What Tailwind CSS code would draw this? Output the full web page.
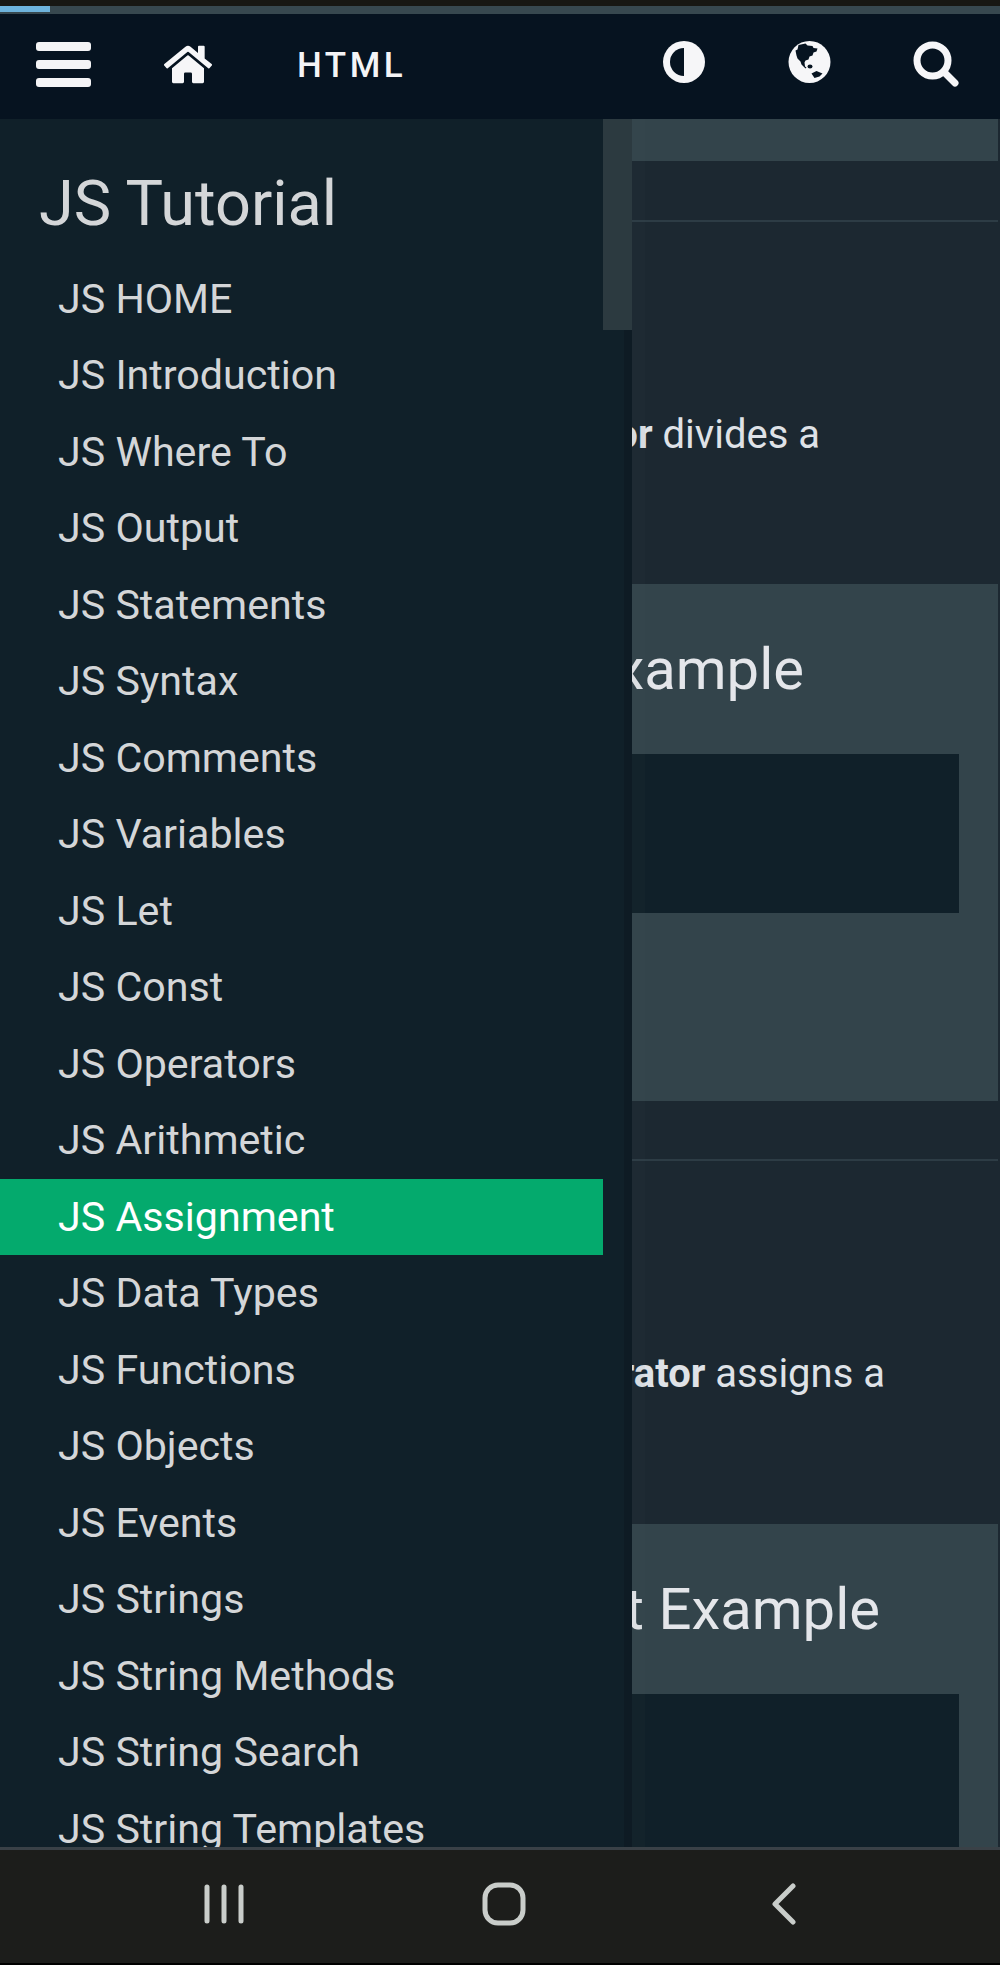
<!DOCTYPE html>
<html lang="en">
<head>
  <meta charset="UTF-8">
  <title>JS Tutorial</title>
  <script src="https://cdn.jsdelivr.net/npm/@tailwindcss/browser@4"></script>
</head>
<body class="bg-black font-['Roboto',sans-serif]">
  <div class="flex flex-col w-[1000px] h-[1965px] overflow-hidden">

    <!-- status strip and progress -->
    <div class="h-[6px] bg-[#171713]"></div>
    <div class="h-[8px] bg-[#37484f]">
      <div class="w-[50px] h-[6px] bg-[#6db3dc]"></div>
    </div>

    <!-- top nav -->
    <div class="flex items-center h-[105px] pl-[36px] pr-[41px] bg-[#061320] text-white">
      <div class="flex flex-col gap-[9px] w-[55px] mb-[5px]">
        <div class="h-[9px] rounded-[3px] bg-[#f4f4f6]"></div>
        <div class="h-[9px] rounded-[3px] bg-[#f4f4f6]"></div>
        <div class="h-[9px] rounded-[3px] bg-[#f4f4f6]"></div>
      </div>
      <svg class="ml-[73px] mb-[5px] w-[48px] h-[43px]" viewBox="0 0 576 512" fill="#f6f6f8"><path d="M280.37 148.26L96 300.11V464a16 16 0 0 0 16 16l112.06-.29a16 16 0 0 0 15.92-16V368a16 16 0 0 1 16-16h64a16 16 0 0 1 16 16v95.64a16 16 0 0 0 16 16.05L464 480a16 16 0 0 0 16-16V300L295.67 148.26a12.19 12.19 0 0 0-15.3 0zM571.6 251.47L488 182.56V44.05a12 12 0 0 0-12-12h-56a12 12 0 0 0-12 12v72.61L318.47 43a48 48 0 0 0-61 0L4.34 251.47a12 12 0 0 0-1.6 16.9l25.5 31A12 12 0 0 0 45.15 301l235.22-193.74a12.19 12.19 0 0 1 15.3 0L530.9 301a12 12 0 0 0 16.9-1.6l25.5-31a12 12 0 0 0-1.7-16.93z"/></svg>
      <div class="ml-[85px] text-[35px] font-medium tracking-[3.500px] text-[#f4f4f6]">HTML</div>
      <svg class="ml-auto mb-[9px] w-[42px] h-[42px]" viewBox="0 0 42 42"><circle cx="21" cy="21" r="21" fill="#f6f6f8"/><path d="M21 7a14 14 0 0 0 0 28z" fill="#061320"/></svg>
      <svg class="ml-[83px] mb-[9px] w-[43px] h-[42px]" viewBox="0 0 42 42"><circle cx="21" cy="21" r="21" fill="#f6f6f8"/><path d="M10 4l7-1.500 2 2 5 .5 1 2 4 .5-1 3-3 1-1 3-3 1-1 3-3 1-1 2 .5 4 1.500 1-1 1-4-4-1-3-3-3-1-3-1-5 2-1z" fill="#061320"/><ellipse cx="21.500" cy="25.500" rx="2.500" ry="2" fill="#061320"/><path d="M23 32.500l5-2.500 6 2.500-3 3-5 1.500z" fill="#061320"/></svg>
      <svg class="ml-[82px] mb-[5px] w-[46px] h-[46px]" viewBox="0 0 46 46" fill="none" stroke="#f6f6f8" stroke-width="7" stroke-linecap="round"><circle cx="19.500" cy="19.500" r="15.500"/><path d="M31 31l11 11"/></svg>
    </div>

    <div class="flex flex-1 min-h-0">
      <!-- sidebar -->
      <div class="relative w-[632px] shrink-0 bg-[#102029] overflow-hidden text-[#d4d6d8]">
        <div class="absolute inset-y-0 right-0 w-[8px] bg-[#0e1b24]"></div>
        <div class="absolute top-0 right-0 w-[29px] h-[211px] bg-[#2c3a40]"></div>
        <h4 class="h-[141.500px] pt-[47px] pl-[39px] text-[63px] leading-[76px]">JS Tutorial</h4>
        <div class="relative w-[603px] text-[41.200px] leading-[76.500px] whitespace-nowrap">
          <a class="block pl-[58px]">JS HOME</a>
          <a class="block pl-[58px]">JS Introduction</a>
          <a class="block pl-[58px]">JS Where To</a>
          <a class="block pl-[58px]">JS Output</a>
          <a class="block pl-[58px]">JS Statements</a>
          <a class="block pl-[58px]">JS Syntax</a>
          <a class="block pl-[58px]">JS Comments</a>
          <a class="block pl-[58px]">JS Variables</a>
          <a class="block pl-[58px]">JS Let</a>
          <a class="block pl-[58px]">JS Const</a>
          <a class="block pl-[58px]">JS Operators</a>
          <a class="block pl-[58px]">JS Arithmetic</a>
          <a class="block pl-[58px] bg-[#04aa6d] text-white">JS Assignment</a>
          <a class="block pl-[58px]">JS Data Types</a>
          <a class="block pl-[58px]">JS Functions</a>
          <a class="block pl-[58px]">JS Objects</a>
          <a class="block pl-[58px]">JS Events</a>
          <a class="block pl-[58px]">JS Strings</a>
          <a class="block pl-[58px]">JS String Methods</a>
          <a class="block pl-[58px]">JS String Search</a>
          <a class="block pl-[58px]">JS String Templates</a>
        </div>
      </div>

      <!-- page beside the sidebar, its text runs off under the left edge -->
      <div class="relative flex-1 min-w-0 bg-[#1c2831] overflow-hidden">
        <div class="h-[42px] mr-[2px] bg-[#33444b]"></div>
        <div class="h-[61px] mr-[2px] border-b-2 border-[#2d3c45]"></div>
        <p class="flex justify-end items-center h-[362px] pt-[64px] pr-[180px] text-[40px] whitespace-nowrap text-[#dfe2e7]"><span>The <b>division operator</b> divides a</span></p>
        <div class="h-[517px] mr-[2px] bg-[#33444b]">
          <h3 class="flex justify-end items-center h-[170px] pr-[194px] text-[58px] whitespace-nowrap text-[#e4e6ea]">Division Example</h3>
          <div class="h-[159px] mr-[39px] bg-[#102029]"></div>
        </div>
        <div class="h-[60px] mr-[2px] border-b-2 border-[#2d3c45]"></div>
        <p class="flex justify-end items-center h-[363px] pt-[63px] pr-[115px] text-[40px] whitespace-nowrap text-[#dfe2e7]"><span>The <b>assignment operator</b> assigns a</span></p>
        <div class="h-[400px] mr-[2px] bg-[#33444b]">
          <h3 class="flex justify-end items-center h-[170px] pr-[118px] text-[58px] whitespace-nowrap text-[#e4e6ea]">Assignment Example</h3>
          <div class="h-[200px] mr-[39px] bg-[#102029]"></div>
        </div>
        <div class="absolute inset-y-0 left-0 w-[13px] bg-[#4a5a62]/5"></div>
      </div>
    </div>

    <!-- phone nav buttons -->
    <div class="h-[118px] border-t-[3px] border-[#3a4147] border-b-2 border-b-black bg-[#1c1d1b]">
      <div class="grid grid-cols-3 w-[840px] h-full ml-[84px] pb-[6px] place-items-center">
        <svg class="w-[40px] h-[40px]" viewBox="0 0 40 40" stroke="#c9cdca" stroke-width="5" stroke-linecap="round"><path d="M3 3v34M20 3v34M37 3v34"/></svg>
        <svg class="w-[44px] h-[44px]" viewBox="0 0 44 44" fill="none" stroke="#c9cdca" stroke-width="5"><rect x="3" y="3" width="38" height="38" rx="13"/></svg>
        <svg class="w-[24px] h-[42px]" viewBox="0 0 24 42" fill="none" stroke="#c9cdca" stroke-width="5" stroke-linecap="round" stroke-linejoin="round"><path d="M21 3L3 21l18 18"/></svg>
      </div>
    </div>
  </div>
</body>
</html>
